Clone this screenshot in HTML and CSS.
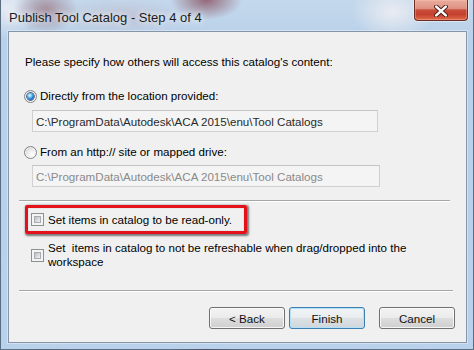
FILE: index.html
```html
<!DOCTYPE html>
<html>
<head>
<meta charset="utf-8">
<link rel="stylesheet" href="styles.css">
</head>
<body>
<div class="window">
  <header class="titlebar">
    <span class="title">Publish Tool Catalog - Step 4 of 4</span>
    <button class="close" aria-label="Close">
      <svg width="14" height="12" viewBox="0 0 14 12">
        <path d="M2.2 1.6 L11.8 10.4 M11.8 1.6 L2.2 10.4" stroke="#4a1c14" stroke-width="4.2" stroke-linecap="round" fill="none"/>
        <path d="M2.2 1.6 L11.8 10.4 M11.8 1.6 L2.2 10.4" stroke="#ffffff" stroke-width="2.5" stroke-linecap="round" fill="none"/>
      </svg>
    </button>
  </header>
  <main class="client">
    <p class="intro">Please specify how others will access this catalog's content:</p>
    <div class="option opt1"><span class="radio on"></span><span class="label">Directly from the location provided:</span></div>
    <div class="field f1">C:\ProgramData\Autodesk\ACA 2015\enu\Tool Catalogs</div>
    <div class="option opt2"><span class="radio"></span><span class="label">From an http:// site or mapped drive:</span></div>
    <div class="field f2">C:\ProgramData\Autodesk\ACA 2015\enu\Tool Catalogs</div>
    <div class="sep sep1"></div>
    <div class="highlight"><span class="check"></span><span class="label">Set items in catalog to be read-only.</span></div>
    <div class="option opt3"><span class="check"></span><span class="label">Set&nbsp; items in catalog to not be refreshable when drag/dropped into the<br>workspace</span></div>
    <div class="sep sep2"></div>
    <div class="buttons">
      <button class="btn">&lt; Back</button>
      <button class="btn default">Finish</button>
      <button class="btn cancel">Cancel</button>
    </div>
  </main>
</div>
</body>
</html>
```

FILE: styles.css
```css
html, body {
  margin: 0;
  padding: 0;
  width: 474px;
  height: 350px;
  overflow: hidden;
  background: #b9d1ea;
}

.window {
  box-sizing: border-box;
  width: 474px;
  height: 350px;
  display: flex;
  flex-direction: column;
  padding: 0 6px 6px 7px;
  border: 1px solid rgba(55, 75, 95, 0.75);
  border-top: none;
  font-family: "Liberation Sans", Arial, sans-serif;
  font-size: 11.6px;
  color: #000;
  background:
    radial-gradient(ellipse 32px 24px at 45px 10px, rgba(140, 80, 88, 0.55), transparent),
    radial-gradient(ellipse 36px 20px at 205px 0px, rgba(115, 30, 42, 0.6), transparent),
    radial-gradient(ellipse 42px 28px at 392px 12px, rgba(238, 238, 242, 0.9), transparent),
    radial-gradient(ellipse 70px 18px at 120px 16px, rgba(190, 160, 172, 0.35), transparent),
    radial-gradient(ellipse 30px 30px at 6px 8px, rgba(240, 240, 245, 0.8), transparent),
    linear-gradient(#c4d8ec, #b8d0e9 40px, #b9d1ea);
}

.titlebar {
  height: 31px;
  flex: none;
  display: flex;
  align-items: flex-start;
}

.title {
  margin-top: 10px;
  margin-left: 1px;
  font-size: 13px;
  line-height: 15px;
  color: #1c1c1c;
  text-shadow: 0 0 6px rgba(255, 255, 255, 0.95), 0 0 10px rgba(255, 255, 255, 0.7);
}

.close {
  margin-left: auto;
  margin-right: -1px;
  width: 54px;
  height: 21px;
  padding: 2px 0 0 0;
  box-sizing: border-box;
  display: flex;
  align-items: center;
  justify-content: center;
  border: 1px solid #6a2c22;
  border-top: none;
  border-radius: 0 0 4px 4px;
  background: linear-gradient(#e9ad9f 0%, #de9283 42%, #c94c3b 50%, #c3412f 72%, #e26b4a 100%);
  box-shadow: 0 0 0 1px rgba(255, 255, 255, 0.45), inset 0 0 0 1px rgba(255, 200, 180, 0.35);
}

.client {
  flex: 1;
  display: flex;
  flex-direction: column;
  align-items: flex-start;
  background: #f0f0f0;
  border: 1px solid #8496a8;
  box-shadow: 0 0 0 1px rgba(255, 255, 255, 0.35);
}

.intro {
  margin: 23px 0 0 16px;
  line-height: 14px;
}

.option {
  display: flex;
  align-items: center;
  line-height: 14px;
}

.opt1 { margin: 20px 0 0 15px; }
.opt2 { margin: 13px 0 0 15px; }
.opt1 .label, .opt2 .label { margin-left: 3px; }

.radio {
  flex: none;
  box-sizing: border-box;
  width: 13px;
  height: 13px;
  border-radius: 50%;
  border: 1px solid #858585;
  background: radial-gradient(circle at 65% 70%, #ffffff 0%, #ececec 45%, #c0c0c0 100%);
  box-shadow: inset 0 0 0 1px rgba(250, 250, 250, 0.7);
  display: flex;
  align-items: center;
  justify-content: center;
}

.radio.on::after {
  content: "";
  width: 7px;
  height: 7px;
  border-radius: 50%;
  background: radial-gradient(circle at 40% 35%, #e8f8ff 0%, #86d0f6 25%, #2a7cce 58%, #0c3b78 100%);
  box-shadow: 0 0 0 0.7px #1a3f6c;
}

.field {
  box-sizing: border-box;
  height: 22px;
  margin: 6px 0 0 23px;
  padding: 0 3px;
  display: flex;
  align-items: center;
  border: 1px solid #d0d0d0;
  border-top-color: #c4c4c4;
  background: #f4f4f4;
  color: #2a2a2a;
}

.f1 { width: 346px; margin-top: 7px; }
.f2 { width: 348px; color: #8a8a8a; }

.sep {
  height: 0;
  border-top: 1px solid #a6a6a6;
  border-bottom: 1px solid #ffffff;
  margin-left: 10px;
}

.sep1 { width: 431px; margin-top: 13px; }
.sep2 { width: 434px; margin-top: 21px; }

.highlight {
  box-sizing: border-box;
  width: 222px;
  height: 29px;
  margin: 3px 0 0 16px;
  padding-left: 3px;
  display: flex;
  align-items: center;
  border: 3px solid #e3121a;
  border-radius: 2px;
  box-shadow: 1px 1px 2px 1px rgba(0, 0, 0, 0.5), inset 0 0 1px rgba(0, 0, 0, 0.4);
}

.highlight .label { margin-left: 4px; line-height: 14px; }

.opt3 { margin: 7px 0 0 22px; }
.opt3 .label { margin-left: 4px; }

.check {
  flex: none;
  box-sizing: border-box;
  width: 13px;
  height: 13px;
  padding: 2px;
  border: 1px solid #8e8f8f;
  background: #f4f4f4;
  display: flex;
}

.check::after {
  content: "";
  flex: 1;
  border: 1px solid #a9adb2;
  background: linear-gradient(135deg, #b9bcc0 0%, #d9dadc 55%, #f1f1f1 100%);
}

.buttons {
  align-self: stretch;
  display: flex;
  justify-content: flex-end;
  margin: 15px 11px 0 0;
}

.btn {
  box-sizing: border-box;
  width: 76px;
  height: 22px;
  padding: 0;
  font-family: "Liberation Sans", Arial, sans-serif;
  font-size: 11.6px;
  color: #111;
  border: 1px solid #707070;
  border-radius: 3px;
  background: linear-gradient(#f3f3f3 0%, #ebebeb 48%, #dddddd 52%, #cfcfcf 100%);
  box-shadow: inset 0 0 0 1px rgba(252, 252, 252, 0.85);
}

.btn.default {
  margin-left: 4px;
  border-color: #3c7fb1;
  background: linear-gradient(#f1f4f6 0%, #e9edf0 48%, #dce1e5 52%, #d0d6db 100%);
  box-shadow: inset 0 0 0 1px #b5e1f7;
}

.btn.cancel { margin-left: 14px; }
```
